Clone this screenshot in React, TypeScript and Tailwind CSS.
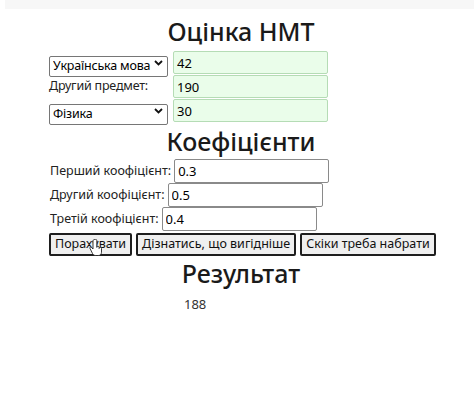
import React from 'react';

const font = { fontFamily: '"Noto Sans", "Open Sans", sans-serif' };

const Chevron = () => (
  <svg width="9" height="6" viewBox="0 0 9 6" className="pointer-events-none absolute right-[5px] top-[8px]">
    <path d="M1 1l3.5 3.5L8 1" fill="none" stroke="#111" strokeWidth="1.8" />
  </svg>
);

const Select: React.FC<{ value: string; options: string[] }> = ({ value, options }) => (
  <div className="relative w-[119px] h-[21px]">
    <select
      defaultValue={value}
      className="appearance-none w-full h-full border border-[#767676] rounded-[2px] bg-white pl-[3px] pr-3 text-[12.5px] tracking-[-0.2px] text-black outline-none"
    >
      {options.map(o => (
        <option key={o}>{o}</option>
      ))}
    </select>
    <Chevron />
  </div>
);

const ScoreInput: React.FC<{ value: string }> = ({ value }) => (
  <input
    defaultValue={value}
    className="w-[155px] h-[23px] border border-[#b5dcb5] rounded-[2px] bg-[#eafdea] px-[3px] text-[13px] text-black outline-none"
  />
);

const CoefRow: React.FC<{ label: string; value: string }> = ({ label, value }) => (
  <div className="flex items-center h-[24px]">
    <span className="text-[12.5px] text-[#222] mr-[3px]">{label}</span>
    <input
      defaultValue={value}
      className="w-[155px] h-[24px] border border-[#8a8a8a] rounded-[2px] bg-white px-[3px] text-[13px] text-black outline-none"
    />
  </div>
);

const Btn: React.FC<{ children: React.ReactNode }> = ({ children }) => (
  <button className="h-[23px] px-[4px] whitespace-nowrap border-2 border-[#1e1e1e] rounded-[2px] bg-[#efefef] text-[12.5px] text-[#111] leading-none">
    {children}
  </button>
);

export default function App() {
  return (
    <div style={font} className="relative w-[474px] h-[395px] bg-white overflow-hidden">
      <div className="absolute left-[5px] right-0 top-0 h-[9px] bg-[#f7f7f7]" />
      <div className="w-[384px] ml-[49px] pt-[13px]">
        <h1 className="text-center text-[25px] font-medium text-[#1a1a1a] leading-[36px] h-[38px]">Оцінка НМТ</h1>
        <div className="flex flex-col gap-[1px]">
          <div className="flex items-center gap-[5px]">
            <Select value="Українська мова" options={['Українська мова', 'Математика']} />
            <ScoreInput value="42" />
          </div>
          <div className="flex items-center gap-[5px]">
            <span className="w-[119px] text-[12.5px] tracking-[-0.2px] text-[#222]">Другий предмет:</span>
            <ScoreInput value="190" />
          </div>
          <div className="flex items-center gap-[5px]">
            <Select value="Фізика" options={['Фізика', 'Історія України', 'Англійська мова']} />
            <ScoreInput value="30" />
          </div>
        </div>
        <h2 className="text-center text-[25px] font-medium text-[#1a1a1a] leading-[36px] mt-[1px]">Коефіцієнти</h2>
        <div className="flex flex-col pl-[1px]">
          <CoefRow label="Перший коофіцієнт:" value="0.3" />
          <CoefRow label="Другий коофіцієнт:" value="0.5" />
          <CoefRow label="Третій коофіцієнт:" value="0.4" />
        </div>
        <div className="relative flex gap-[4px] mt-[2px]">
          <Btn>Порахувати</Btn>
          <Btn>Дізнатись, що вигідніше</Btn>
          <Btn>Скіки треба набрати</Btn>
          <svg width="14" height="18" viewBox="0 0 14 18" className="absolute left-[40px] top-[6px]">
            <path d="M4 1.5v8.5l-1.5-1.6c-.7-.7-1.9-.2-1.6.8l2.6 5.3c.6 1.3 1.8 2 3.2 2h2.6c1.8 0 3.2-1.4 3.2-3.2V9.5c0-.7-.5-1.2-1.2-1.2s-1.2.5-1.2 1.2V8.4c0-.7-.5-1.2-1.2-1.2S7.8 7.7 7.8 8.4V1.5C7.8.8 7.2.3 6.5.3S4 .8 4 1.5z" fill="#fff" stroke="#222" strokeWidth="0.9" />
          </svg>
        </div>
        <h2 className="text-center text-[25px] font-medium text-[#1a1a1a] leading-[36px] mt-[-1px]">Результат</h2>
        <p className="text-[13px] text-[#333] ml-[135px] mt-[4px]">188</p>
      </div>
    </div>
  );
}
